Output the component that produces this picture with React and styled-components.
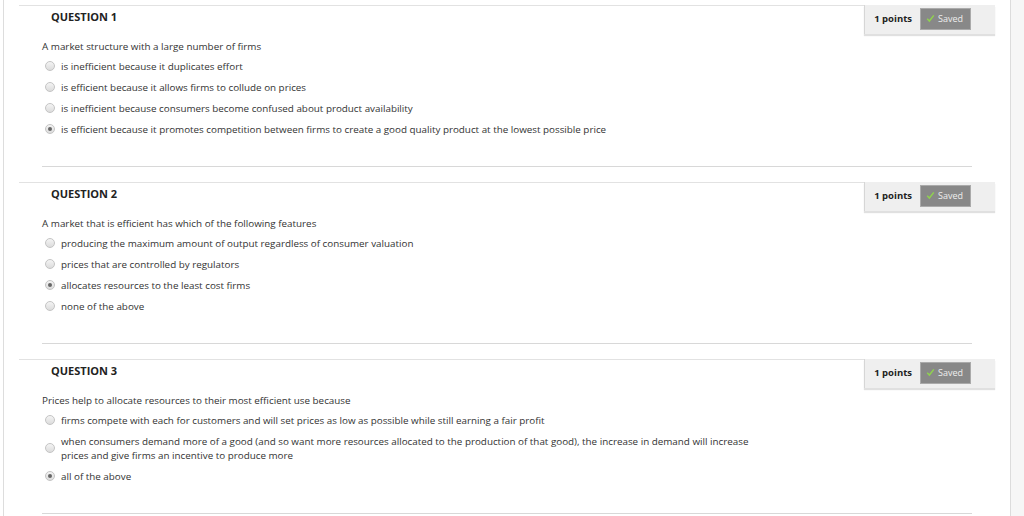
import React from 'react'
import styled, { createGlobalStyle } from 'styled-components'

const questions = [
  {
    title: 'QUESTION 1',
    text: 'A market structure with a large number of firms',
    options: [
      'is inefficient because it duplicates effort',
      'is efficient because it allows firms to collude on prices',
      'is inefficient because consumers become confused about product availability',
      'is efficient because it promotes competition between firms to create a good quality product at the lowest possible price',
    ],
    selected: 3,
  },
  {
    title: 'QUESTION 2',
    text: 'A market that is efficient has which of the following features',
    options: [
      'producing the maximum amount of output regardless of consumer valuation',
      'prices that are controlled by regulators',
      'allocates resources to the least cost firms',
      'none of the above',
    ],
    selected: 2,
  },
  {
    title: 'QUESTION 3',
    text: 'Prices help to allocate resources to their most efficient use because',
    options: [
      'firms compete with each for customers and will set prices as low as possible while still earning a fair profit',
      'when consumers demand more of a good (and so want more resources allocated to the production of that good), the increase in demand will increase prices and give firms an incentive to produce more',
      'all of the above',
    ],
    selected: 2,
  },
]

const Check = () => (
  <svg width="9" height="9" viewBox="0 0 9 9">
    <path d="M1.2 4.8 L3.4 7 L7.8 1.4" fill="none" stroke="#8fd14f" strokeWidth="1.5" />
  </svg>
)

const App = () => (
  <>
    <GlobalStyle />
    <Page>
      <Main>
        {questions.map((q) => (
          <Question key={q.title}>
            <Header>
              <Title>{q.title}</Title>
              <PointsBox>
                <Points>1 points</Points>
                <SavedBadge>
                  <Check /> Saved
                </SavedBadge>
              </PointsBox>
            </Header>
            <Body>
              <Prompt>{q.text}</Prompt>
              <Options>
                {q.options.map((opt, i) => (
                  <Option key={i}>
                    <Radio checked={i === q.selected} />
                    <OptionText>{opt}</OptionText>
                  </Option>
                ))}
              </Options>
            </Body>
          </Question>
        ))}
      </Main>
      <SidePane />
    </Page>
  </>
)

export default App

// STYLES

const GlobalStyle = createGlobalStyle`
  html, body {
    margin: 0;
    padding: 0;
    background: #fff;
    font-family: 'Open Sans', 'Liberation Sans', sans-serif;
    color: #333;
  }
`

const Page = styled.div`
  display: flex;
  height: 516px;
  overflow: hidden;
  padding-left: 3px;
`

const Main = styled.div`
  flex: 1;
  border-left: 1px solid #ddd;
  padding-top: 5px;
`

const SidePane = styled.div`
  width: 13px;
  border-left: 1px solid #dcdcdc;
  background: #f6f6f6;
`

const Question = styled.div`
  margin-left: 15px;
  width: 976px;
  margin-bottom: 15px;
`

const Header = styled.div`
  display: flex;
  justify-content: space-between;
  align-items: flex-start;
  border-top: 1px solid #e2e2e2;
`

const Title = styled.h2`
  margin: 0;
  padding: 3px 0 0 32px;
  font-size: 11px;
  line-height: 16px;
  font-weight: 700;
  color: #222;
`

const PointsBox = styled.div`
  display: flex;
  align-items: center;
  gap: 8px;
  height: 29px;
  padding: 0 24px 0 9px;
  margin-top: -1px;
  background: #efefef;
  border-left: 1px solid #d6d6d6;
  box-shadow: 0 2px 1px #e0e0e0;
`

const Points = styled.span`
  font-size: 9.5px;
  font-weight: 700;
  color: #222;
  padding-bottom: 2px;
`

const SavedBadge = styled.span`
  display: flex;
  align-items: center;
  gap: 3px;
  height: 20px;
  padding: 0 7px 0 5px;
  margin-bottom: 2px;
  background: #888;
  border: 1px solid #aaa;
  color: #eee;
  font-size: 9px;
`

const Body = styled.div`
  margin-left: 23px;
  padding: 5px 0 30px;
  width: 930px;
  border-bottom: 1px solid #d8d8d8;
`

const Prompt = styled.p`
  margin: 0;
  font-size: 9.85px;
  line-height: 14px;
  color: #333;
`

const Options = styled.div`
  display: flex;
  flex-direction: column;
  gap: 7px;
  margin-top: 6px;
`

const Option = styled.div`
  display: flex;
  align-items: center;
  gap: 6px;
  padding-left: 3px;
`

const Radio = styled.span`
  flex: none;
  position: relative;
  width: 8px;
  height: 8px;
  border-radius: 50%;
  border: 1px solid #c4c4c4;
  background: linear-gradient(#f4f4f4, #dcdcdc);

  &::after {
    content: '';
    display: ${(p) => (p.checked ? 'block' : 'none')};
    position: absolute;
    left: 2px;
    top: 2px;
    width: 4px;
    height: 4px;
    border-radius: 50%;
    background: #666;
  }
`

const OptionText = styled.span`
  font-size: 9.83px;
  line-height: 14px;
  max-width: 700px;
  color: #333;
`
